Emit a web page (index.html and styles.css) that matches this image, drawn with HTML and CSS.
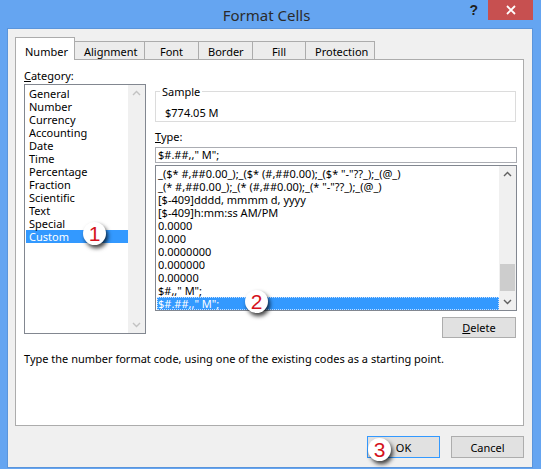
FILE: index.html
```html
<!DOCTYPE html>
<html lang="en">

<head>
    <meta charset="UTF-8">
    <meta name="viewport" content="width=device-width, initial-scale=1.0">
    <title>Format Cells</title>
    <link rel="stylesheet" href="styles.css">
</head>

<body>
    <div class="window">
        <div class="titlebar">
            <span></span>
            <span class="title">Format Cells</span>
            <div class="caption-buttons">
                <span class="help">?</span>
                <span class="close">
                    <svg width="10" height="10" viewBox="0 0 10 10">
                        <path d="M1 1 L9 9 M9 1 L1 9" stroke="#fff" stroke-width="1.8" />
                    </svg>
                </span>
            </div>
        </div>

        <div class="client">
            <!-- Tab strip -->
            <div class="tabs">
                <div class="tab active">Number</div>
                <div class="tab">Alignment</div>
                <div class="tab">Font</div>
                <div class="tab">Border</div>
                <div class="tab">Fill</div>
                <div class="tab">Protection</div>
            </div>

            <div class="panel">
                <div class="col-left">
                    <div class="label"><u>C</u>ategory:</div>
                    <div class="listbox category-list">
                        <div class="items">
                            <div class="item">General</div>
                            <div class="item">Number</div>
                            <div class="item">Currency</div>
                            <div class="item">Accounting</div>
                            <div class="item">Date</div>
                            <div class="item">Time</div>
                            <div class="item">Percentage</div>
                            <div class="item">Fraction</div>
                            <div class="item">Scientific</div>
                            <div class="item">Text</div>
                            <div class="item">Special</div>
                            <div class="item selected">Custom</div>
                        </div>
                        <div class="scrollbar disabled">
                            <svg class="arrow" width="9" height="6" viewBox="0 0 9 6">
                                <polyline points="1,5 4.5,1.5 8,5" />
                            </svg>
                            <div class="track"></div>
                            <svg class="arrow" width="9" height="6" viewBox="0 0 9 6">
                                <polyline points="1,1 4.5,4.5 8,1" />
                            </svg>
                        </div>
                        <span class="badge badge-1">1</span>
                    </div>
                </div>

                <div class="col-right">
                    <fieldset class="sample">
                        <legend>Sample</legend>
                        <div class="sample-value">$774.05 M</div>
                    </fieldset>

                    <div class="label type-label"><u>T</u>ype:</div>
                    <div class="textbox">$#.##,," M";</div>

                    <div class="listbox type-list">
                        <div class="items">
                            <div class="item">_($* #,##0.00_);_($* (#,##0.00);_($* "-"??_);_(@_)</div>
                            <div class="item">_(* #,##0.00_);_(* (#,##0.00);_(* "-"??_);_(@_)</div>
                            <div class="item">[$-409]dddd, mmmm d, yyyy</div>
                            <div class="item">[$-409]h:mm:ss AM/PM</div>
                            <div class="item">0.0000</div>
                            <div class="item">0.000</div>
                            <div class="item">0.0000000</div>
                            <div class="item">0.000000</div>
                            <div class="item">0.00000</div>
                            <div class="item">$#,," M";</div>
                            <div class="item selected focused">$#.##,," M";</div>
                        </div>
                        <div class="scrollbar">
                            <svg class="arrow" width="9" height="6" viewBox="0 0 9 6">
                                <polyline points="1,5 4.5,1.5 8,5" />
                            </svg>
                            <div class="track">
                                <div class="thumb"></div>
                            </div>
                            <svg class="arrow" width="9" height="6" viewBox="0 0 9 6">
                                <polyline points="1,1 4.5,4.5 8,1" />
                            </svg>
                        </div>
                        <span class="badge badge-2">2</span>
                    </div>

                    <button class="btn delete-btn"><u>D</u>elete</button>
                </div>

                <p class="hint">Type the number format code, using one of the existing codes as a starting point.</p>
            </div>

            <div class="dialog-buttons">
                <button class="btn default">
                    OK
                    <span class="badge badge-3">3</span>
                </button>
                <button class="btn">Cancel</button>
            </div>
        </div>
    </div>
</body>

</html>
```

FILE: styles.css
```css
* {
    box-sizing: border-box;
}

body {
    margin: 0;
    width: 541px;
    height: 469px;
    overflow: hidden;
    font-family: "Segoe UI", "Noto Sans", sans-serif;
    font-size: 11px;
    color: #000;
}

u {
    text-decoration: underline;
    text-underline-offset: 1px;
}

/* Window frame */
.window {
    height: 469px;
    background-color: #65a5f1;
    display: flex;
    flex-direction: column;
}

.titlebar {
    height: 29px;
    display: grid;
    grid-template-columns: 1fr auto 1fr;
    padding-right: 8px;
}

.title {
    font-size: 15px;
    line-height: 30px;
    color: #2b2b2b;
}

.caption-buttons {
    display: flex;
    justify-content: flex-end;
    align-items: flex-start;
}

.help {
    font-family: "Liberation Sans", sans-serif;
    font-weight: bold;
    font-size: 14px;
    line-height: 20px;
    color: #1f1f1f;
    margin-right: 10px;
}

.close {
    width: 45px;
    height: 20px;
    background-color: #c75050;
    display: flex;
    align-items: center;
    justify-content: center;
}

.client {
    flex: 1;
    margin: 0 9px 2px 8px;
    background-color: #f0f0f0;
    padding: 8px 8px 9px 7px;
    box-shadow: 0 0 0 1px #5b95db;
}

/* Tabs */
.tabs {
    display: flex;
    align-items: flex-end;
    height: 22px;
    position: relative;
    z-index: 1;
}

.tab {
    height: 18px;
    line-height: 17px;
    padding: 1px 9px 0;
    background-color: #ececec;
    border: 1px solid #acacac;
    border-bottom: none;
    margin-left: -1px;
    text-align: center;
}

.tab:nth-child(2) { width: 71px; }
.tab:nth-child(3) { width: 55px; }
.tab:nth-child(4) { width: 55px; }
.tab:nth-child(5) { width: 54px; }
.tab:nth-child(6) { width: 70px; }

.tab.active {
    width: 60px;
    height: 23px;
    padding-top: 5px;
    margin-left: 0;
    margin-bottom: -1px;
    background-color: #fff;
    position: relative;
    z-index: 2;
}

.panel {
    height: 367px;
    background-color: #fff;
    border: 1px solid #acacac;
    padding: 9px 6px 0 8px;
    display: grid;
    grid-template-columns: 122px 1fr;
    column-gap: 9px;
    align-content: start;
}

.label {
    line-height: 13px;
}

.col-right {
    padding-top: 16px;
    display: flex;
    flex-direction: column;
}

/* List boxes */
.listbox {
    position: relative;
    display: flex;
    border: 1px solid #828790;
    background-color: #fff;
}

.items {
    flex: 1;
    padding-top: 1px;
    overflow: hidden;
}

.item {
    height: 13px;
    line-height: 13px;
    white-space: nowrap;
}

.item.selected {
    background-color: #3399ff;
    color: #fff;
}

.item.focused {
    outline: 1px dotted #c8e0ff;
    outline-offset: -1px;
}

.category-list {
    margin-top: 2px;
    height: 250px;
}

.category-list .items {
    padding-top: 2px;
}

.category-list .item {
    margin-left: 1px;
    padding-left: 3px;
}

.type-list {
    margin-top: 2px;
    height: 146px;
}

.type-list .item {
    margin-left: 1px;
    padding-left: 1px;
}

.scrollbar {
    width: 17px;
    background-color: #f0f0f0;
    display: flex;
    flex-direction: column;
    align-items: center;
    padding: 5px 0;
}

.scrollbar .arrow {
    fill: none;
    stroke: #606060;
    stroke-width: 1.4;
}

.scrollbar.disabled .arrow {
    stroke: #c2c2c2;
}

.scrollbar .track {
    flex: 1;
    width: 100%;
    display: flex;
    flex-direction: column;
    justify-content: flex-end;
    padding: 0 1px 8px;
}

.thumb {
    height: 27px;
    background-color: #cdcdcd;
}

/* Sample group */
.sample {
    margin: 0 1px 0 0;
    padding: 8px 9px 2px;
    border: 1px solid #dcdcdc;
    min-width: 0;
}

.sample legend {
    padding: 0 2px;
    margin-left: -5px;
    line-height: 13px;
}

.sample-value {
    line-height: 13px;
}

.type-label {
    margin-top: 8px;
}

.textbox {
    margin-top: 4px;
    height: 16px;
    line-height: 14px;
    padding-left: 2px;
    border: 1px solid #abadb3;
}

/* Buttons */
.btn {
    font-family: inherit;
    font-size: 11px;
    color: #000;
    background-color: #e1e1e1;
    border: 1px solid #adadad;
    padding: 0;
    height: 22px;
    width: 73px;
    position: relative;
}

.delete-btn {
    align-self: flex-end;
    margin-top: 6px;
    margin-right: 1px;
    width: 74px;
    height: 21px;
}

.btn.default {
    border-color: #3399ff;
}

.hint {
    grid-column: 1 / span 2;
    margin: 14px 0 0;
    line-height: 13px;
}

.dialog-buttons {
    display: flex;
    justify-content: flex-end;
    gap: 11px;
    margin-top: 10px;
}

/* Numbered callouts */
.badge {
    position: absolute;
    width: 23px;
    height: 23px;
    border-radius: 50%;
    background-color: #fff;
    color: #d5121c;
    font-family: "Liberation Sans", sans-serif;
    font-size: 21px;
    line-height: 23px;
    text-align: center;
    box-shadow: 2px 3px 4px rgba(0, 0, 0, 0.75);
    z-index: 3;
}

.badge-1 {
    left: 58px;
    top: 137px;
}

.badge-2 {
    left: 89px;
    top: 124px;
}

.badge-3 {
    left: 0;
    top: 1px;
}
```
